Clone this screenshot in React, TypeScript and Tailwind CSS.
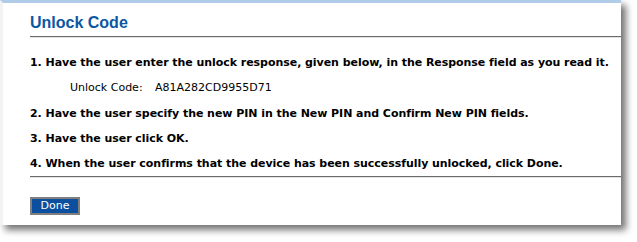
import React from "react";

export default function App() {
  return (
    <div className="w-[637px] h-[242px] bg-white overflow-hidden">
      <div className="w-[621px] h-[225px] bg-white border-t-[3px] border-t-[#b1cce9] border-l-[3px] border-l-[#f3f3f3] shadow-[5px_5px_7px_rgba(0,0,0,0.55)] pl-[27px] flex flex-col">
        <div className="pt-[10px] h-[34px] border-b border-b-[#6b6b6b] font-['Liberation_Sans',Arial,sans-serif] font-bold text-[16px] leading-[20px] text-[#0b57a4]">
          Unlock Code
        </div>
        <div className="h-px bg-[#e4e4e4]" />
        <div className="font-['DejaVu_Sans',Verdana,sans-serif] text-[11px] text-black tracking-[-0.05px]">
          <div className="font-bold mt-[18px] leading-[13px]">
            1. Have the user enter the unlock response, given below, in the Response field as you read it.
          </div>
          <div className="mt-[12px] leading-[13px] pl-[40px] flex tracking-normal">
            <span className="w-[85px]">Unlock Code:</span>
            <span>A81A282CD9955D71</span>
          </div>
          <div className="font-bold mt-[13px] leading-[13px]">
            2. Have the user specify the new PIN in the New PIN and Confirm New PIN fields.
          </div>
          <div className="font-bold mt-[12px] leading-[13px]">3. Have the user click OK.</div>
          <div className="font-bold mt-[12px] leading-[13px]">
            4. When the user confirms that the device has been successfully unlocked, click Done.
          </div>
        </div>
        <div className="mt-[6px] border-b border-b-[#6b6b6b]" />
        <div className="h-px bg-[#e4e4e4]" />
        <div className="mt-[19px]">
          <button className="w-[50px] h-[18px] border-2 border-[#7f7f7f] bg-[#0b4f9e] text-white font-['DejaVu_Sans',Verdana,sans-serif] text-[11px] leading-[14px] flex items-center justify-center">
            Done
          </button>
        </div>
      </div>
    </div>
  );
}
